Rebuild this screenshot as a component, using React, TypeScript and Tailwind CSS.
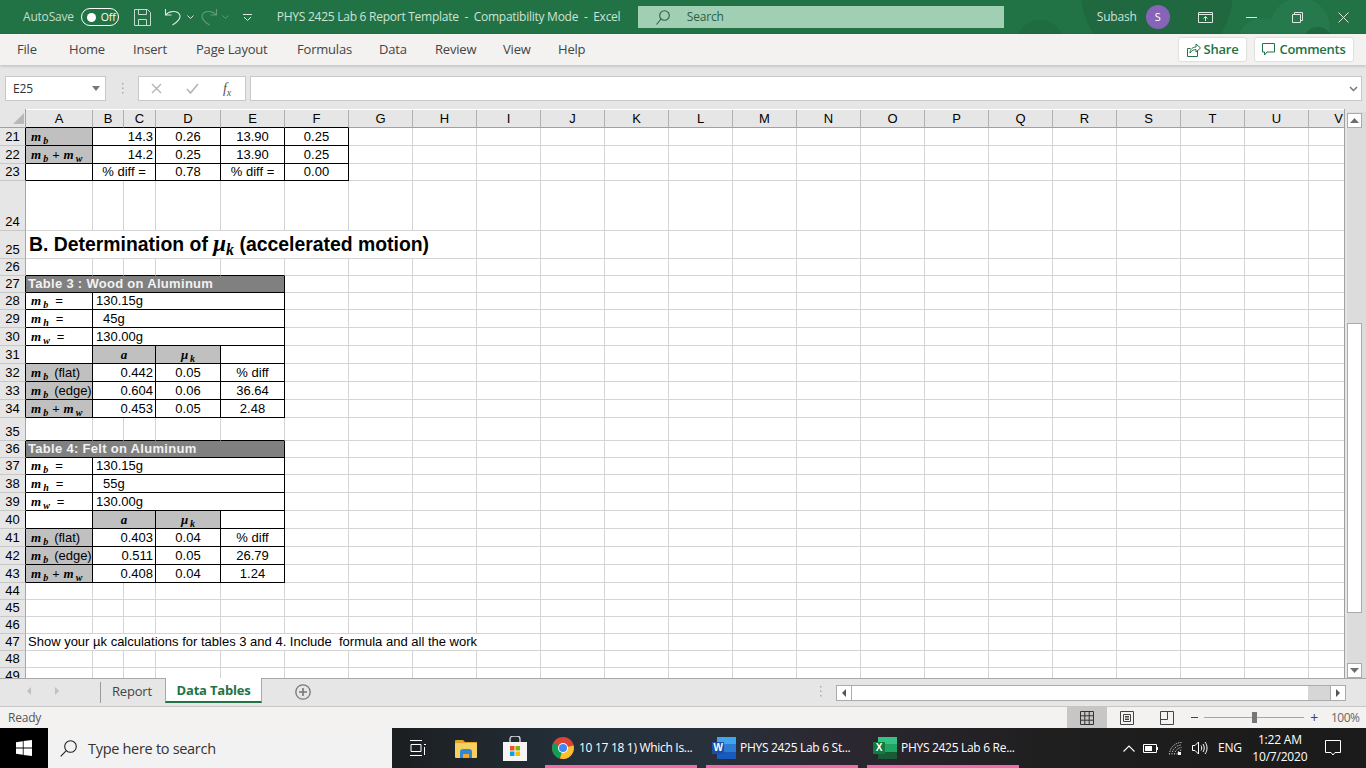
import type { ReactNode } from 'react';

const COLS = 'grid grid-cols-[26px_67px_31px_32px_65px_64px_64px_repeat(15,64px)_36px]';
const COL_LABELS = 'ABCDEFGHIJKLMNOPQRSTUV'.split('');

type Cell = { span?: number; cls?: string; node?: ReactNode };
type Row = { n: number; h: string; box?: boolean; cells?: Cell[] };

// math letters used in the sheet, m with a subscript
const Sym = ({ c = 'm', s }: { c?: string; s?: string }) => (
  <span className="font-['Liberation_Serif',serif] font-bold italic text-[13px]">
    {c}
    {s && <sub className="ml-[2px] text-[10px]">{s}</sub>}
  </span>
);

const MbMw = () => (
  <span className="flex items-baseline gap-[4px]">
    <Sym s="b" />
    <span className="font-['Liberation_Serif',serif] font-bold text-[13px]">+</span>
    <Sym s="w" />
  </span>
);

const gray = (node: ReactNode): Cell => ({ cls: 'bg-[#c0c0c0] border-black pl-[5px]', node });
const num = (text: string): Cell => ({ span: 2, cls: 'col-span-2 border-black justify-end pr-[2px]', node: text });
const mid = (text: string): Cell => ({ cls: 'border-black justify-center', node: text });
const blank: Cell = { cls: 'border-black' };
const headCell = (c: ReactNode, span: number, cls: string): Cell => ({ span, cls: `${cls} border-black justify-center bg-[#c0c0c0]`, node: c });
const banner = (text: string): Cell => ({
  span: 5,
  cls: 'col-span-5 bg-[#808080] border-black text-[#f2f2f2] font-bold pl-[2px] tracking-[0.3px]',
  node: text,
});
const label = (s: string): Cell => ({
  cls: 'border-black pl-[5px]',
  node: (
    <span className="flex items-baseline gap-[7px]">
      <Sym s={s} />
      <span>=</span>
    </span>
  ),
});
const value = (text: string, pad: string): Cell => ({ span: 4, cls: `col-span-4 border-black ${pad}`, node: text });
const withText = (s: string, text: string) =>
  gray(
    <span className="flex items-baseline gap-[6px]">
      <Sym s={s} />
      <span>{text}</span>
    </span>
  );
const topLine: Cell[] = Array.from({ length: 5 }, () => ({ cls: 'border-b-black' }));

const massTable = (start: number, title: string, hanging: string, hPad: string, vals: string[][]): Row[] => [
  { n: start, h: 'h-[17px]', box: true, cells: [banner(title)] },
  { n: start + 1, h: 'h-[17px]', box: true, cells: [label('b'), value('130.15g', 'pl-[3px]')] },
  { n: start + 2, h: 'h-[18px]', box: true, cells: [label('h'), value(hanging, hPad)] },
  { n: start + 3, h: 'h-[18px]', box: true, cells: [label('w'), value('130.00g', 'pl-[3px]')] },
  {
    n: start + 4,
    h: 'h-[18px]',
    box: true,
    cells: [
      blank,
      headCell(<Sym c="a" />, 2, 'col-span-2'),
      headCell(<Sym c="μ" s="k" />, 1, ''),
      blank,
    ],
  },
  { n: start + 5, h: 'h-[18px]', box: true, cells: [withText('b', '(flat)'), num(vals[0][0]), mid(vals[0][1]), mid(vals[0][2])] },
  { n: start + 6, h: 'h-[18px]', box: true, cells: [withText('b', '(edge)'), num(vals[1][0]), mid(vals[1][1]), mid(vals[1][2])] },
  { n: start + 7, h: 'h-[18px]', box: true, cells: [gray(<MbMw />), num(vals[2][0]), mid(vals[2][1]), mid(vals[2][2])] },
];

const ROWS: Row[] = [
  { n: 21, h: 'h-[18px]', box: true, cells: [gray(<Sym s="b" />), num('14.3'), mid('0.26'), mid('13.90'), mid('0.25')] },
  { n: 22, h: 'h-[18px]', box: true, cells: [gray(<MbMw />), num('14.2'), mid('0.25'), mid('13.90'), mid('0.25')] },
  {
    n: 23,
    h: 'h-[17px]',
    box: true,
    cells: [blank, { span: 2, cls: 'col-span-2 border-black justify-center', node: '% diff =' }, mid('0.78'), mid('% diff ='), mid('0.00')],
  },
  { n: 24, h: 'h-[50px]' },
  {
    n: 25,
    h: 'h-[28px]',
    cells: [
      {
        span: 8,
        cls: 'col-span-8 pl-[3px] pb-[2px]',
        node: (
          <span className="text-[19.4px] font-bold leading-[24px]">
            B. Determination of{' '}
            <span className="font-['Liberation_Serif',serif] italic text-[23px]">
              μ<sub className="text-[16px]">k</sub>
            </span>{' '}
            (accelerated motion)
          </span>
        ),
      },
    ],
  },
  { n: 26, h: 'h-[17px]', cells: topLine },
  ...massTable(27, 'Table 3 : Wood on Aluminum', '45g', 'pl-[10px]', [
    ['0.442', '0.05', '% diff'],
    ['0.604', '0.06', '36.64'],
    ['0.453', '0.05', '2.48'],
  ]),
  { n: 35, h: 'h-[23px]', cells: topLine },
  ...massTable(36, 'Table 4: Felt on Aluminum', '55g', 'pl-[10px]', [
    ['0.403', '0.04', '% diff'],
    ['0.511', '0.05', '26.79'],
    ['0.408', '0.04', '1.24'],
  ]),
  { n: 44, h: 'h-[17px]' },
  { n: 45, h: 'h-[17px]' },
  { n: 46, h: 'h-[17px]' },
  {
    n: 47,
    h: 'h-[17px]',
    cells: [
      {
        span: 9,
        cls: 'col-span-9 pl-[2px] whitespace-pre',
        node: 'Show your µk calculations for tables 3 and 4. Include  formula and all the work',
      },
    ],
  },
  { n: 48, h: 'h-[17px]' },
  { n: 49, h: 'h-[17px]' },
];

const SheetRow = ({ row }: { row: Row }) => {
  const cells = row.cells ?? [];
  const used = cells.reduce((sum, c) => sum + (c.span ?? 1), 0);
  const rest = Array.from({ length: 22 - used });
  return (
    <div className={`${COLS} ${row.h}`}>
      <div
        className={`flex items-end justify-center leading-4 bg-[#e6e6e6] border-b border-b-[#c8c8c8] border-r ${
          row.box ? 'border-r-black' : 'border-r-[#a6a6a6]'
        }`}
      >
        {row.n}
      </div>
      {cells.map((c, i) => (
        <div key={i} className={`flex items-end whitespace-nowrap leading-4 border-r border-b border-[#d4d4d4] ${c.cls ?? ''}`}>
          {c.node}
        </div>
      ))}
      {rest.map((_, i) => (
        <div key={i} className="border-r border-b border-[#d4d4d4]" />
      ))}
    </div>
  );
};

const Sheet = () => (
  <div className="w-[1345px] h-[569px] overflow-hidden border-r border-[#a0a0a0] font-['Liberation_Sans',sans-serif] text-[13px] tracking-normal text-black">
    <div className={`${COLS} h-[19px] mb-0`}>
      <div className="relative bg-[#e6e6e6] border-b border-[#a0a0a0] border-r">
        <svg width="11" height="11" viewBox="0 0 11 11" className="absolute left-[13px] top-[4px]">
          <polygon points="11,0 11,11 0,11" fill="#b8b8b8" />
        </svg>
      </div>
      {COL_LABELS.map((c, i) => (
        <div
          key={c}
          className={`flex items-end leading-4 mt-px bg-[#e6e6e6] border-r border-r-[#b0b0b0] border-b ${
            i < 6 ? 'border-b-black' : 'border-b-[#a0a0a0]'
          } ${c === 'V' ? 'justify-end pr-px' : 'justify-center'}`}
        >
          {c}
        </div>
      ))}
    </div>
    {ROWS.map((r) => (
      <SheetRow key={r.n} row={r} />
    ))}
  </div>
);

const ScrollBtn = ({ up }: { up?: boolean }) => (
  <div className="w-[15px] h-[15px] bg-white border border-[#ababab] flex items-center justify-center">
    <svg width="9" height="5" viewBox="0 0 9 5">
      <polygon points={up ? '0,5 9,5 4.5,0' : '0,0 9,0 4.5,5'} fill="#6e6e6e" />
    </svg>
  </div>
);

const VScroll = () => (
  <div className="w-[21px] h-[569px] bg-[#e6e6e6] pl-[2px] pt-[3px]">
    <div className="h-full bg-[#dcdcdc] flex flex-col pt-px">
      <ScrollBtn up />
      <div className="mt-[195px] w-[15px] h-[290px] bg-white border border-[#ababab]" />
      <div className="mt-auto">
        <ScrollBtn />
      </div>
    </div>
  </div>
);

const TitleBg = () => (
  <svg className="absolute inset-0 pointer-events-none" width="1366" height="34" viewBox="0 0 1366 34">
    <circle cx="1157" cy="-8" r="76" fill="#1f6840" />
    <circle cx="1040" cy="44" r="24" fill="#1f6c42" />
    <circle cx="1300" cy="28" r="30" fill="#26794c" />
    <circle cx="1318" cy="42" r="15" fill="#1f6840" />
    <circle cx="1263" cy="44" r="26" fill="#26794c" />
  </svg>
);

const TitleBar = () => (
  <div className="relative h-[34px] bg-[#217346] flex items-center text-[12px] overflow-hidden">
    <TitleBg />
    <span className="relative ml-[23px] text-[#c4dccd]">AutoSave</span>
    <div className="relative ml-[7px] w-[38px] h-[18px] rounded-full border border-white flex items-center pl-[5px] gap-[5px]">
      <span className="w-[9px] h-[9px] rounded-full bg-white" />
      <span className="text-[10.5px] leading-none text-white">Off</span>
    </div>
    <svg className="relative ml-[15px]" width="17" height="17" viewBox="0 0 17 17" fill="none" stroke="#c4dccd">
      <path d="M.5.5h13l3 3v13H.5z M4.5.5v5h8v-5 M4.5 16.5v-6h8v6" />
    </svg>
    <svg className="relative ml-[13px]" width="18" height="18" viewBox="0 0 18 18" fill="none" stroke="#dce9e1" strokeWidth="1.1">
      <path d="M1.5 1v6h6 M1.5 7C5 3 13 2 15.5 6.5 17.5 10 13 14.5 8.5 17" />
    </svg>
    <svg className="relative ml-[5px]" width="7" height="4" viewBox="0 0 7 4" fill="none" stroke="#dce9e1">
      <path d="M.5.5l3 3 3-3" />
    </svg>
    <svg className="relative ml-[6px]" width="18" height="18" viewBox="0 0 18 18" fill="none" stroke="#5e9c7b" strokeWidth="1.1">
      <path d="M16.5 1v6h-6 M16.5 7C13 3 5 2 2.5 6.5 .5 10 5 14.5 9.5 17" />
    </svg>
    <svg className="relative ml-[4px]" width="7" height="4" viewBox="0 0 7 4" fill="none" stroke="#5e9c7b">
      <path d="M.5.5l3 3 3-3" />
    </svg>
    <svg className="relative ml-[14px]" width="9" height="7" viewBox="0 0 9 7" fill="none" stroke="#dce9e1">
      <path d="M0 .5h9 M1 3l3.5 3.5L8 3" />
    </svg>
    <span className="relative ml-[25px] w-[361px] text-[#cfe2d6] whitespace-pre tracking-[-0.26px]">PHYS 2425 Lab 6 Report Template  -  Compatibility Mode  -  Excel</span>
    <div className="relative w-[366px] h-[22px] bg-[#a1cfb4] flex items-center text-[#2e5f45]">
      <svg className="ml-[18px]" width="14" height="15" viewBox="0 0 14 15" fill="none" stroke="#2e5f45" strokeWidth="1.1">
        <circle cx="8.5" cy="5.5" r="4.8" />
        <path d="M5 9l-4.5 5.5" />
      </svg>
      <span className="ml-[17px]">Search</span>
    </div>
    <span className="relative ml-[93px] text-[#cfe2d6]">Subash</span>
    <div className="relative ml-[9px] w-[24px] h-[24px] rounded-full bg-[#8764b8] flex items-center justify-center text-white text-[11px]">S</div>
    <svg className="relative ml-[28px]" width="15" height="11" viewBox="0 0 15 11" fill="none" stroke="#dce9e1">
      <path d="M.5.5h14v10H.5z M.5 2.5h14 M7.5 9V4.5 M5.5 6.5l2-2 2 2" />
    </svg>
    <svg className="relative ml-[33px]" width="11" height="1" viewBox="0 0 11 1">
      <rect width="11" height="1" fill="#dce9e1" />
    </svg>
    <svg className="relative ml-[35px]" width="11" height="11" viewBox="0 0 11 11" fill="none" stroke="#dce9e1">
      <path d="M.5 2.5h8v8h-8z M2.5 2.5v-2h8v8h-2" />
    </svg>
    <svg className="relative ml-[35px]" width="11" height="11" viewBox="0 0 11 11" fill="none" stroke="#dce9e1">
      <path d="M.5.5l10 10 M10.5.5l-10 10" />
    </svg>
  </div>
);

const TABS = [
  { label: 'File', w: 'w-[52px]' },
  { label: 'Home', w: 'w-[64px]' },
  { label: 'Insert', w: 'w-[63px]' },
  { label: 'Page Layout', w: 'w-[101px]' },
  { label: 'Formulas', w: 'w-[82px]' },
  { label: 'Data', w: 'w-[56px]' },
  { label: 'Review', w: 'w-[68px]' },
  { label: 'View', w: 'w-[55px]' },
  { label: 'Help', w: 'w-[40px]' },
];

const Ribbon = () => (
  <div className="relative z-10 h-[31px] bg-[#f3f2f1] flex items-center pl-[17px] text-[13px] text-[#444] shadow-[0_1px_3px_rgba(0,0,0,0.2)]">
    {TABS.map((t) => (
      <span key={t.label} className={t.w}>
        {t.label}
      </span>
    ))}
    <div className="ml-auto flex gap-[9px] mr-[13px] text-[#217346] font-semibold tracking-[-0.25px]">
      <div className="w-[67px] h-[23px] bg-white rounded-[2px] shadow-[0_0_2px_rgba(0,0,0,0.25)] flex items-center justify-center gap-[3px]">
        <svg width="14" height="14" viewBox="0 0 14 14" fill="none" stroke="#217346">
          <path d="M3.5 5.5H.5v8h10V8 M3 10c0-4 3-6 6-6V1l4.5 4L9 9V6.5C7 6.5 4.5 7.5 3 10z" />
        </svg>
        <span>Share</span>
      </div>
      <div className="w-[98px] h-[23px] bg-white rounded-[2px] shadow-[0_0_2px_rgba(0,0,0,0.25)] flex items-center justify-center gap-[4px]">
        <svg width="13" height="13" viewBox="0 0 13 13" fill="none" stroke="#217346">
          <path d="M.5.5h12v8.5H5L2.5 12V9h-2z" />
        </svg>
        <span>Comments</span>
      </div>
    </div>
  </div>
);

const FormulaBar = () => (
  <div className="h-[44px] bg-[#e6e6e6] flex items-start pt-[11px] pl-[5px] text-[12px] text-[#333]">
    <div className="w-[101px] h-[25px] bg-white border border-[#c8c8c8] flex items-center pl-[7px] justify-between pr-[5px]">
      <span>E25</span>
      <svg width="8" height="5" viewBox="0 0 8 5">
        <polygon points="0,0 8,0 4,5" fill="#777" />
      </svg>
    </div>
    <div className="w-[32px] h-[25px] flex items-center justify-center">
      <svg width="3" height="11" viewBox="0 0 3 11" fill="#aaa">
        <rect x="1" width="1.5" height="1.5" />
        <rect x="1" y="4.5" width="1.5" height="1.5" />
        <rect x="1" y="9" width="1.5" height="1.5" />
      </svg>
    </div>
    <div className="w-[108px] h-[25px] bg-white border border-[#c8c8c8] flex items-center pl-[12px]">
      <svg width="11" height="11" viewBox="0 0 11 11" fill="none" stroke="#b5b5b5" strokeWidth="1.4">
        <path d="M1 1l9 9 M10 1l-9 9" />
      </svg>
      <svg className="ml-[24px]" width="13" height="11" viewBox="0 0 13 11" fill="none" stroke="#b5b5b5" strokeWidth="1.6">
        <path d="M1 6l3.5 4L12 1" />
      </svg>
      <span className="ml-[24px] font-['Liberation_Serif',serif] italic text-[14px] text-[#555]">
        f<sub className="text-[10px]">x</sub>
      </span>
    </div>
    <div className="ml-[4px] w-[1112px] h-[25px] bg-white border border-[#c8c8c8] flex items-center justify-end pr-[3px]">
      <svg width="9" height="6" viewBox="0 0 9 6" fill="none" stroke="#777" strokeWidth="1.5">
        <path d="M1 1l3.5 3.5L8 1" />
      </svg>
    </div>
  </div>
);

const SheetTabs = () => (
  <div className="h-[29px] bg-[#e6e6e6] border-t border-[#a8a8a8] border-b border-b-[#c6c6c6] flex items-start text-[13px] text-[#444]">
    <div className="w-[100px] h-[24px] flex items-center pl-[27px] gap-[24px]">
      <svg width="4" height="8" viewBox="0 0 4 8">
        <polygon points="4,0 4,8 0,4" fill="#c0c0c0" />
      </svg>
      <svg width="4" height="8" viewBox="0 0 4 8">
        <polygon points="0,0 0,8 4,4" fill="#c0c0c0" />
      </svg>
    </div>
    <div className="mt-[3px] h-[21px] w-[65px] border-l border-[#9a9a9a] flex items-center pl-[11px] pb-px">Report</div>
    <div className="-mt-px w-[97px] h-[25px] pt-[2px] bg-white border-x border-[#a8a8a8] border-b-2 border-b-[#217346] flex items-center justify-center font-bold text-[#217346]">
      Data Tables
    </div>
    <svg className="ml-[33px] mt-[5px]" width="16" height="16" viewBox="0 0 16 16" fill="none" stroke="#777" strokeWidth="1.3">
      <circle cx="8" cy="8" r="7.2" />
      <path d="M8 4v8 M4 8h8" strokeWidth="1.6" />
    </svg>
    <svg className="ml-[509px] mt-[7px]" width="3" height="11" viewBox="0 0 3 11" fill="#aaa">
      <rect width="1.5" height="1.5" />
      <rect y="4.5" width="1.5" height="1.5" />
      <rect y="9" width="1.5" height="1.5" />
    </svg>
    <div className="ml-[13px] mt-[6px] h-[16px] flex border border-[#ababab] bg-[#d6d6d6] w-[510px]">
      <div className="w-[15px] flex items-center justify-center bg-white border-r border-[#ababab]">
        <svg width="4" height="8" viewBox="0 0 4 8">
          <polygon points="4,0 4,8 0,4" fill="#555" />
        </svg>
      </div>
      <div className="w-[456px] bg-white" />
      <div className="ml-auto w-[15px] flex items-center justify-center bg-white border-l border-[#ababab]">
        <svg width="4" height="8" viewBox="0 0 4 8">
          <polygon points="0,0 0,8 4,4" fill="#555" />
        </svg>
      </div>
    </div>
  </div>
);

const StatusBar = () => (
  <div className="h-[21px] bg-[#f3f2f1] flex items-center pl-[8px] text-[12px] text-[#555]">
    <span>Ready</span>
    <div className="ml-[1026px] w-[40px] h-full bg-[#c8c6c4] flex items-center justify-center">
      <svg width="14" height="14" viewBox="0 0 14 14" fill="none" stroke="#333">
        <path d="M.5.5h13v13H.5z M.5 4.8h13 M.5 9.2h13 M4.8.5v13 M9.2.5v13" />
      </svg>
    </div>
    <svg className="ml-[13px]" width="14" height="14" viewBox="0 0 14 14" fill="none" stroke="#444">
      <path d="M.5.5h13v13H.5z M3.5 3.5h7v7h-7z M5 5.5h4 M5 7h4 M5 8.5h4" />
    </svg>
    <svg className="ml-[26px]" width="14" height="14" viewBox="0 0 14 14" fill="none" stroke="#444">
      <path d="M.5.5h13v13H.5z M.5 8.5h7V.5" />
    </svg>
    <span className="ml-[17px] w-[7px] h-px bg-[#444]" />
    <div className="relative ml-[6px] w-[100px] h-px bg-[#a6a6a6]">
      <span className="absolute left-[48px] -top-[5px] w-[5px] h-[11px] bg-[#767676]" />
    </div>
    <span className="ml-[6px] text-[14px] leading-none text-[#444]">+</span>
    <span className="ml-[13px] text-[#666] tracking-[-0.5px]">100%</span>
  </div>
);

const WinLogo = () => (
  <svg width="16" height="16" viewBox="0 0 16 16" fill="#fff">
    <path d="M0 2.2l6.8-1v6.4H0z M7.6 1.1L16 0v7.6H7.6z M0 8.4h6.8v6.4l-6.8-1z M7.6 8.4H16V16l-8.4-1.1z" />
  </svg>
);

const Chrome = () => (
  <svg className="mx-px" width="22" height="22" viewBox="0 0 22 22">
    <circle cx="11" cy="11" r="11" fill="#db4437" />
    <path d="M11 11L1.5 5.5A11 11 0 0 0 8 21.6z" fill="#0f9d58" />
    <path d="M11 11l10.6-2.5A11 11 0 0 1 8 21.6z" fill="#fbc02d" />
    <circle cx="11" cy="11" r="5" fill="#fff" />
    <circle cx="11" cy="11" r="4" fill="#4285f4" />
  </svg>
);

const OfficeIcon = ({ letter, tile, back }: { letter: string; tile: string; back: string[] }) => (
  <div className="relative w-[24px] h-[22px] flex flex-col items-end">
    {back.map((c) => (
      <span key={c} className={`w-[19px] h-[7.33px] ${c}`} />
    ))}
    <span className={`absolute left-0 top-[5px] w-[12px] h-[12px] flex items-center justify-center text-white text-[10px] font-bold leading-none font-['Liberation_Sans',sans-serif] ${tile}`}>
      {letter}
    </span>
  </div>
);

const TaskItem = ({ icon, text, w, ml }: { icon: ReactNode; text: string; w: string; ml: string }) => (
  <div className={`relative h-full flex items-center ${w} ${ml} pl-[6px] gap-[4px]`}>
    {icon}
    <span className="text-[12px] text-white whitespace-nowrap tracking-[-0.3px]">{text}</span>
    <span className="absolute left-0 right-0 bottom-0 h-[3px] bg-[#f06ba8]" />
  </div>
);

const TaskBar = () => (
  <div className="h-[40px] flex items-stretch text-white bg-[linear-gradient(90deg,#171717_0%,#1b1d1f_28%,#24303a_42%,#28303a_52%,#2b2730_62%,#1f1f20_76%,#1a1a1a_100%)]">
    <div className="w-[48px] bg-black flex items-center justify-center">
      <WinLogo />
    </div>
    <div className="w-[344px] bg-[#f2f2f2] flex items-center pl-[12px] text-[#333] text-[14.5px]">
      <svg width="17" height="17" viewBox="0 0 17 17" fill="none" stroke="#222" strokeWidth="1.1">
        <circle cx="10.5" cy="6.5" r="5.8" />
        <path d="M6.3 10.7L.7 16.3" />
      </svg>
      <span className="ml-[11px] pt-px tracking-[-0.3px]">Type here to search</span>
    </div>
    <svg className="ml-[18px] self-center" width="16" height="16" viewBox="0 0 16 16" fill="none" stroke="#fff">
      <path d="M0 .5h12 M0 15.5h12 M1 4.5h10v7H1z" />
      <path d="M14 4.5h2 M14.5 7v8" />
    </svg>
    <svg className="ml-[29px] self-center" width="22" height="19" viewBox="0 0 22 19">
      <path d="M0 2a1 1 0 0 1 1-1h7l2 2h12v3H0z" fill="#e0a528" />
      <rect y="4" width="22" height="15" rx="1" fill="#f6cf63" />
      <path d="M5 19v-6a3 3 0 0 1 3-3h6a3 3 0 0 1 3 3v6h-3v-4H8v4z" fill="#2f88d0" />
      <rect x="8" y="15" width="6" height="4" fill="#f0a92a" />
    </svg>
    <svg className="ml-[26px] self-center" width="24" height="25" viewBox="0 0 24 25">
      <path d="M7 7V3a3 3 0 0 1 3-3h4a3 3 0 0 1 3 3v4" fill="none" stroke="#ddd" strokeWidth="1.3" />
      <rect y="6" width="24" height="19" fill="#f4f4f4" />
      <rect x="7" y="10" width="4.5" height="4.5" fill="#f25022" />
      <rect x="12.5" y="10" width="4.5" height="4.5" fill="#7fba00" />
      <rect x="7" y="15.5" width="4.5" height="4.5" fill="#00a4ef" />
      <rect x="12.5" y="15.5" width="4.5" height="4.5" fill="#ffb900" />
    </svg>
    <TaskItem ml="ml-[18px]" w="w-[152px]" text="10 17 18 1) Which Is..." icon={<Chrome />} />
    <TaskItem
      ml="ml-[9px]"
      w="w-[152px]"
      text="PHYS 2425 Lab 6 St..."
      icon={<OfficeIcon letter="W" tile="bg-[#1d4fa8]" back={['bg-[#41a5ee]', 'bg-[#2b7cd3]', 'bg-[#185abd]']} />}
    />
    <TaskItem
      ml="ml-[9px]"
      w="w-[152px]"
      text="PHYS 2425 Lab 6 Re..."
      icon={<OfficeIcon letter="X" tile="bg-[#107c41]" back={['bg-[#33c481]', 'bg-[#21a366]', 'bg-[#185c37]']} />}
    />
    <svg className="ml-[104px] self-center" width="12" height="7" viewBox="0 0 12 7" fill="none" stroke="#fff" strokeWidth="1.1">
      <path d="M.5 6.5L6 1l5.5 5.5" />
    </svg>
    <svg className="ml-[8px] self-center" width="15" height="9" viewBox="0 0 15 9" fill="none" stroke="#fff">
      <path d="M.5.5h13v8H.5z" />
      <rect x="2" y="2" width="7" height="5" fill="#fff" stroke="none" />
      <rect x="14" y="3" width="1" height="3" fill="#fff" stroke="none" />
    </svg>
    <svg className="ml-[11px] self-center" width="13" height="13" viewBox="0 0 13 13" fill="none" stroke="#bbb">
      <path d="M.5 12.5C.5 6 6 .5 12.5.5 M3 12.5C3 7.5 7.5 3 12.5 3 M5.5 12.5c0-3.5 3.5-7 7-7 M8 12.5c0-2 2.5-4.5 4.5-4.5" strokeDasharray="1.5 1" />
      <rect x="9" y="10" width="3" height="3" fill="#fff" stroke="none" />
    </svg>
    <svg className="ml-[10px] self-center" width="16" height="14" viewBox="0 0 16 14" fill="none" stroke="#fff">
      <path d="M.5 4.5h2.5l3.5-3.5v12L3 9.5H.5z M9 4.5c1 1.5 1 3.5 0 5 M11 3c1.7 2.5 1.7 5.5 0 8 M13 1c2.7 3.5 2.7 8.5 0 12" />
    </svg>
    <span className="ml-[10px] self-center text-[12px]">ENG</span>
    <div className="w-[76px] flex flex-col items-center justify-center text-[12px] leading-[17px]">
      <span>1:22 AM</span>
      <span>10/7/2020</span>
    </div>
    <svg className="ml-[7px] self-center" width="16" height="16" viewBox="0 0 16 16" fill="none" stroke="#fff">
      <path d="M.5.5h15v12H10l-2 2.5-2-2.5H.5z" />
    </svg>
  </div>
);

export default function App() {
  return (
    <div className="w-[1366px] h-[768px] overflow-hidden flex flex-col font-['Open_Sans',sans-serif] tracking-[-0.2px] bg-white">
      <TitleBar />
      <Ribbon />
      <FormulaBar />
      <div className="flex h-[569px]">
        <Sheet />
        <VScroll />
      </div>
      <SheetTabs />
      <StatusBar />
      <TaskBar />
    </div>
  );
}
